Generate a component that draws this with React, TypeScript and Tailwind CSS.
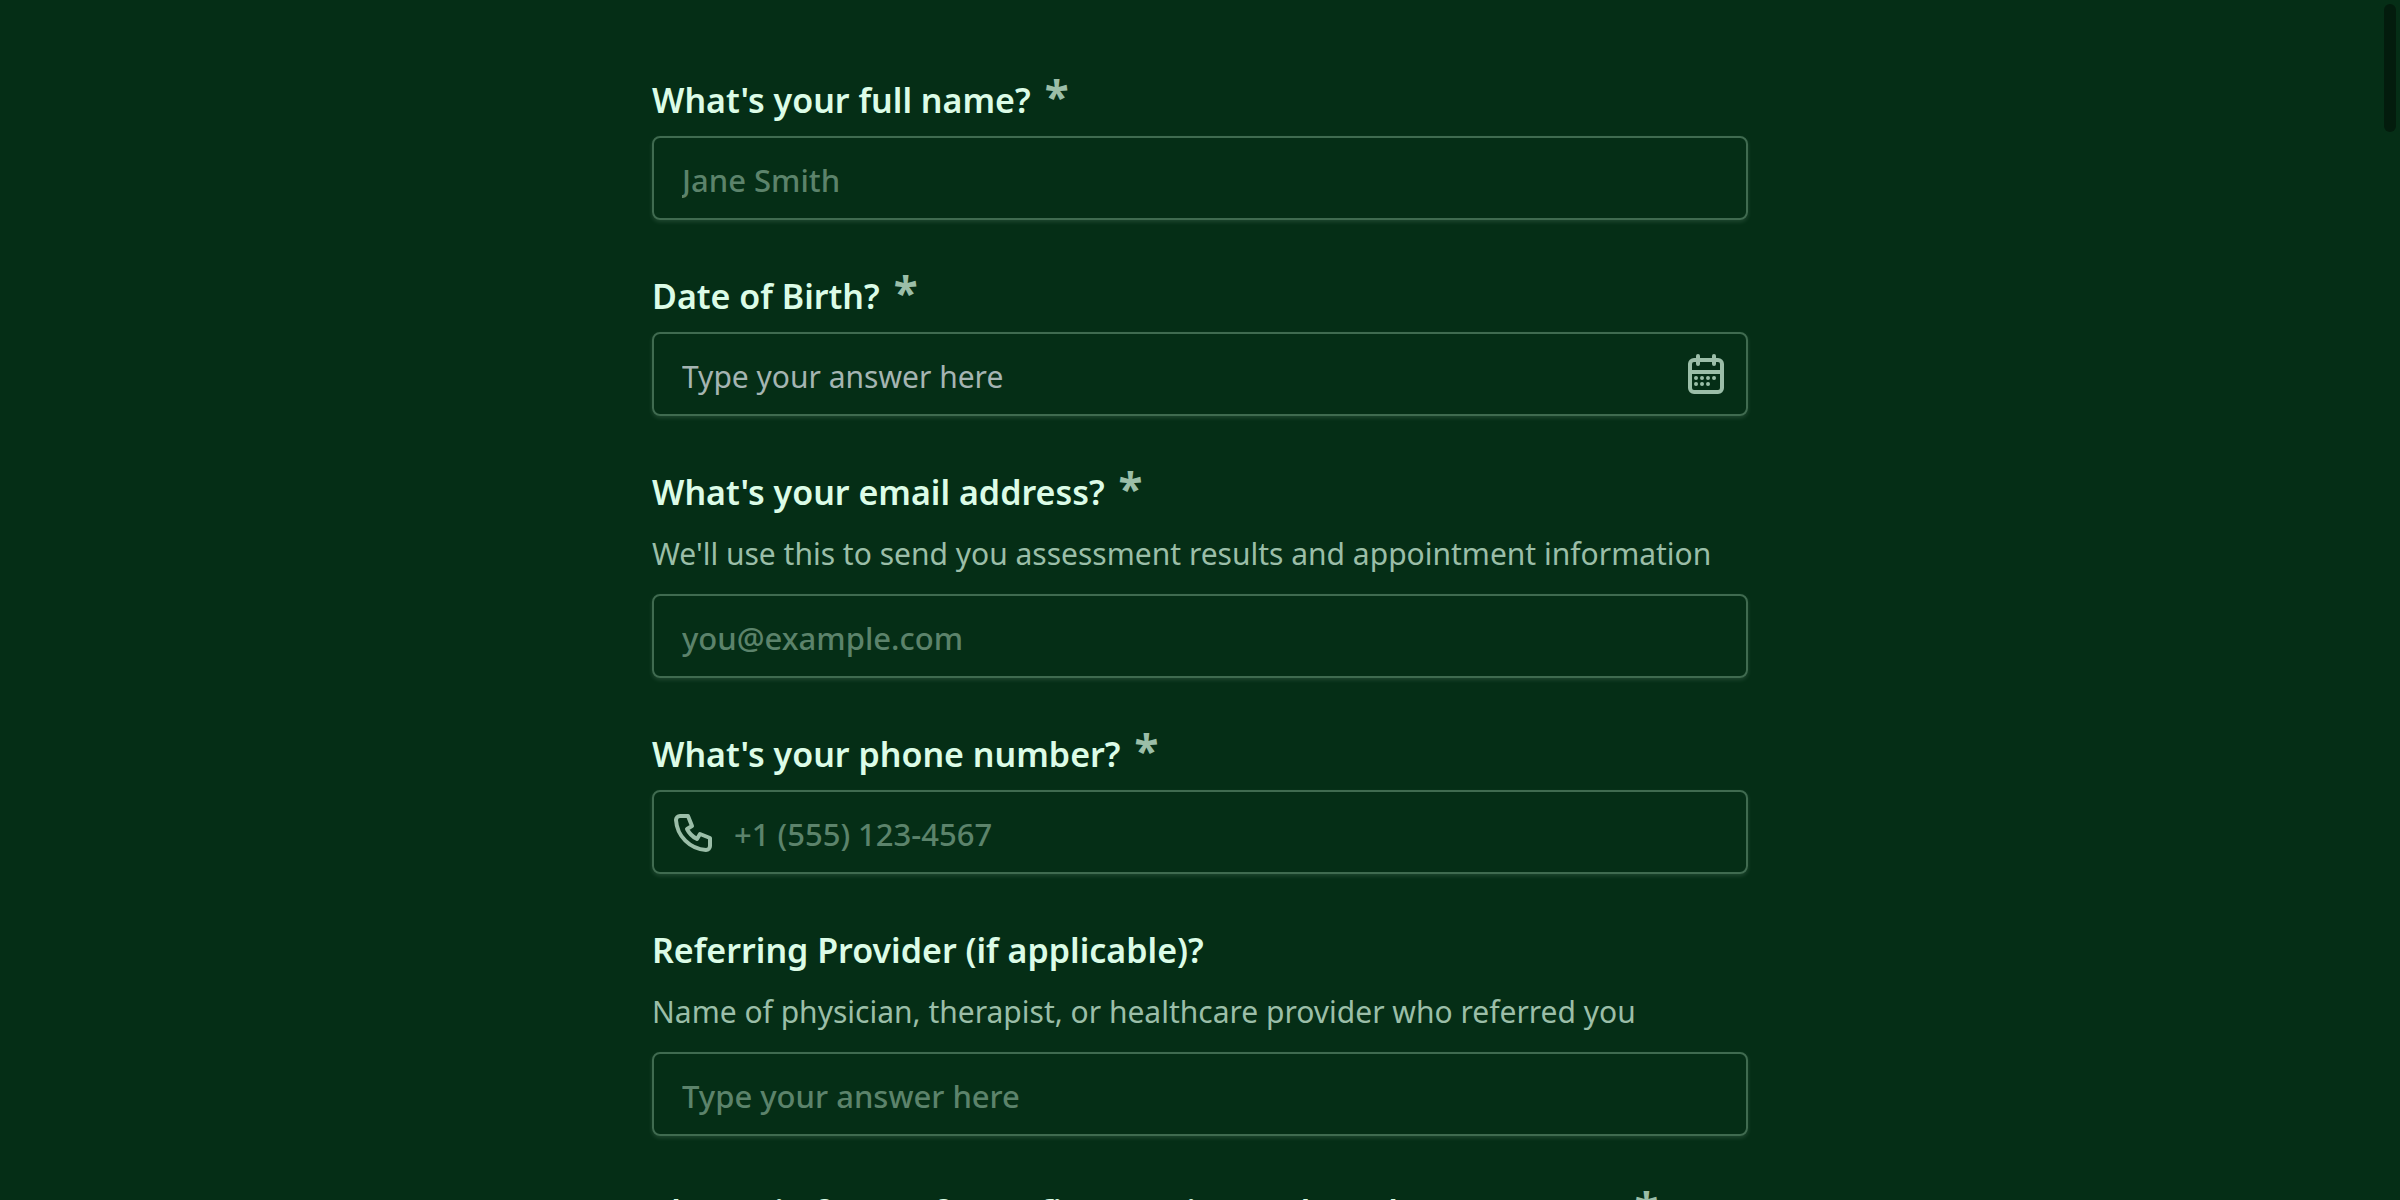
import { useState } from "react";

type Field = {
    id: string;
    label: string;
    type: string;
    placeholder: string;
    required?: boolean;
    description?: string;
    icon?: "phone" | "calendar";
};

const fields: Field[] = [
    { id: "full-name", label: "What's your full name?", type: "text", placeholder: "Jane Smith", required: true },
    { id: "dob", label: "Date of Birth?", type: "text", placeholder: "Type your answer here", required: true, icon: "calendar" },
    {
        id: "email",
        label: "What's your email address?",
        type: "email",
        placeholder: "you@example.com",
        required: true,
        description: "We'll use this to send you assessment results and appointment information",
    },
    { id: "phone", label: "What's your phone number?", type: "tel", placeholder: "+1 (555) 123-4567", required: true, icon: "phone" },
    {
        id: "provider",
        label: "Referring Provider (if applicable)?",
        type: "text",
        placeholder: "Type your answer here",
        description: "Name of physician, therapist, or healthcare provider who referred you",
    },
    {
        id: "focus",
        label: "The main focus of your first session and any key concerns?",
        type: "text",
        placeholder: "Type your answer here",
        required: true,
    },
];

function PhoneIcon() {
    return (
        <svg
            viewBox="0 0 24 24"
            fill="none"
            stroke="currentColor"
            strokeWidth="2"
            strokeLinecap="round"
            strokeLinejoin="round"
            className="size-12 shrink-0 text-[#9bbea8]"
            aria-hidden="true"
        >
            <path d="M5 4h4l2 5l-2.5 1.5a11 11 0 0 0 5 5l1.5 -2.5l5 2v4a2 2 0 0 1 -2 2a16 16 0 0 1 -15 -15a2 2 0 0 1 2 -2" />
        </svg>
    );
}

function CalendarIcon() {
    return (
        <svg
            viewBox="0 0 24 24"
            fill="none"
            stroke="currentColor"
            strokeWidth="2"
            strokeLinecap="round"
            strokeLinejoin="round"
            className="size-12"
            aria-hidden="true"
        >
            <path d="M4 7a2 2 0 0 1 2 -2h12a2 2 0 0 1 2 2v12a2 2 0 0 1 -2 2h-12a2 2 0 0 1 -2 -2v-12" />
            <path d="M16 3v4" />
            <path d="M8 3v4" />
            <path d="M4 11h16" />
            {/* Day dots */}
            <path d="M7 14h.013" />
            <path d="M10.01 14h.005" />
            <path d="M13.01 14h.005" />
            <path d="M16.015 14h.005" />
            <path d="M7.01 17h.005" />
            <path d="M10.01 17h.005" />
            <path d="M13.015 17h.005" />
        </svg>
    );
}

function FormField({ field }: { field: Field }) {
    const [value, setValue] = useState("");

    return (
        <div className="flex flex-col gap-[14px]">
            <label htmlFor={field.id} className="flex gap-[14px] text-[34px] leading-[44px] font-semibold text-[#dcfce7]">
                {field.label}
                {field.required && <span className="text-[44px] leading-9 font-bold text-[#9bbea8]">*</span>}
            </label>

            {field.description && (
                <p id={`${field.id}-desc`} className="text-[30px] leading-[52px] text-[#9bbea8]">
                    {field.description}
                </p>
            )}

            <div className="flex h-21 items-center gap-1 rounded-lg border-2 border-[#406b50] px-4 shadow-[0_2px_4px_rgba(220,252,231,0.12)]">
                {field.icon === "phone" && <PhoneIcon />}
                <input
                    id={field.id}
                    type={field.type}
                    value={value}
                    placeholder={field.placeholder}
                    required={field.required}
                    aria-describedby={field.description ? `${field.id}-desc` : undefined}
                    onChange={(e) => setValue(e.target.value)}
                    className={`h-full min-w-0 flex-1 bg-transparent px-3 pt-1 text-[#dcfce7] outline-none ${
                        field.icon === "calendar"
                            ? "text-[30px] font-normal placeholder:text-[#a5b5b2]"
                            : "text-[31px] font-medium placeholder:text-[#5c836b]"
                    }`}
                />
                {field.icon === "calendar" && (
                    <button type="button" aria-label="Choose a date" className="shrink-0 text-[#9bbea8]">
                        <CalendarIcon />
                    </button>
                )}
            </div>
        </div>
    );
}

export default function App() {
    return (
        <div className="relative h-screen overflow-hidden bg-[#052e16] font-['Noto_Sans',sans-serif]">
            <form className="mx-auto flex w-full max-w-[1096px] flex-col gap-[54px] pt-[78px]">
                {fields.map((field) => (
                    <FormField key={field.id} field={field} />
                ))}
            </form>

            {/* Scrollbar thumb */}
            <div className="absolute top-1 right-1 h-32 w-3 rounded-full bg-[#031c0d]" />
        </div>
    );
}
